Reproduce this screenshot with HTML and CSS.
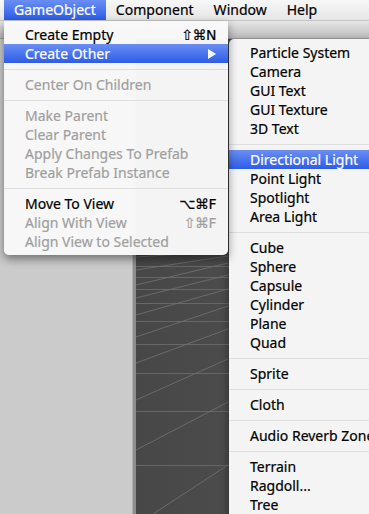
FILE: index.html
```html
<!DOCTYPE html>
<html lang="en">
<head>
    <meta charset="UTF-8">
    <meta name="viewport" content="width=device-width, initial-scale=1.0">
    <title>GameObject menu</title>
    <link rel="stylesheet" href="styles.css">
</head>
<body>
    <div class="menubar">
        <div class="menubar-item active">GameObject</div>
        <div class="menubar-item">Component</div>
        <div class="menubar-item">Window</div>
        <div class="menubar-item">Help</div>
    </div>

    <div class="editor">
        <div class="toolbar"></div>
        <div class="panes">
            <div class="hierarchy"></div>
            <div class="divider"></div>
            <div class="scene">
                <svg width="233" height="475" viewBox="136 39 233 475">
                    <g stroke="#676767" stroke-width="1">
                        <line x1="136" y1="266.5" x2="369" y2="266.5"/>
                        <line x1="136" y1="277.5" x2="369" y2="277.5"/>
                        <line x1="136" y1="289.5" x2="369" y2="289.5"/>
                        <line x1="136" y1="303.5" x2="369" y2="303.5"/>
                        <line x1="136" y1="321.5" x2="369" y2="321.5"/>
                        <line x1="136" y1="344.5" x2="369" y2="344.5"/>
                        <line x1="136" y1="373.5" x2="369" y2="373.5"/>
                        <line x1="136" y1="411.5" x2="369" y2="411.5"/>
                        <line x1="136" y1="465.5" x2="369" y2="465.5"/>
                    </g>
                    <g stroke="#747474" stroke-width="0.8">
                        <line x1="136" y1="257" x2="228" y2="251"/>
                        <line x1="136" y1="270" x2="228" y2="256"/>
                        <line x1="136" y1="285" x2="228" y2="263"/>
                        <line x1="136" y1="298" x2="228" y2="275"/>
                        <line x1="136" y1="315" x2="228" y2="289"/>
                        <line x1="136" y1="337" x2="228" y2="306"/>
                        <line x1="136" y1="363" x2="228" y2="329"/>
                        <line x1="136" y1="400" x2="228" y2="359"/>
                        <line x1="136" y1="450" x2="228" y2="402"/>
                        <line x1="153" y1="514" x2="228" y2="465"/>
                    </g>
                </svg>
            </div>
        </div>
    </div>

    <!-- GameObject dropdown -->
    <div class="menu main-menu">
        <div class="item"><span>Create Empty</span><span class="key">⇧⌘N</span></div>
        <div class="item selected"><span>Create Other</span><span class="arrow"></span></div>
        <div class="sep"></div>
        <div class="item disabled"><span>Center On Children</span></div>
        <div class="sep"></div>
        <div class="item disabled"><span>Make Parent</span></div>
        <div class="item disabled"><span>Clear Parent</span></div>
        <div class="item disabled"><span>Apply Changes To Prefab</span></div>
        <div class="item disabled"><span>Break Prefab Instance</span></div>
        <div class="sep"></div>
        <div class="item"><span>Move To View</span><span class="key">⌥⌘F</span></div>
        <div class="item disabled"><span>Align With View</span><span class="key">⇧⌘F</span></div>
        <div class="item disabled"><span>Align View to Selected</span></div>
    </div>

    <!-- Create Other submenu -->
    <div class="menu sub-menu">
        <div class="item"><span>Particle System</span></div>
        <div class="item"><span>Camera</span></div>
        <div class="item"><span>GUI Text</span></div>
        <div class="item"><span>GUI Texture</span></div>
        <div class="item"><span>3D Text</span></div>
        <div class="sep"></div>
        <div class="item selected"><span>Directional Light</span></div>
        <div class="item"><span>Point Light</span></div>
        <div class="item"><span>Spotlight</span></div>
        <div class="item"><span>Area Light</span></div>
        <div class="sep"></div>
        <div class="item"><span>Cube</span></div>
        <div class="item"><span>Sphere</span></div>
        <div class="item"><span>Capsule</span></div>
        <div class="item"><span>Cylinder</span></div>
        <div class="item"><span>Plane</span></div>
        <div class="item"><span>Quad</span></div>
        <div class="sep"></div>
        <div class="item"><span>Sprite</span></div>
        <div class="sep"></div>
        <div class="item"><span>Cloth</span></div>
        <div class="sep"></div>
        <div class="item"><span>Audio Reverb Zone</span></div>
        <div class="sep"></div>
        <div class="item"><span>Terrain</span></div>
        <div class="item"><span>Ragdoll...</span></div>
        <div class="item"><span>Tree</span></div>
    </div>
</body>
</html>
```

FILE: styles.css
```css
body {
    font-family: "Lucida Grande", "Noto Sans", "DejaVu Sans", sans-serif;
    font-size: 14px;
    margin: 0;
    padding: 0;
    width: 369px;
    height: 514px;
    overflow: hidden;
    position: relative;
    background-color: #cbcbcb;
}

/* Menu bar */
.menubar {
    display: flex;
    height: 21px;
    padding-left: 4px;
    background: linear-gradient(#f7f7f7, #e6e6e6);
    border-bottom: 1px solid #c4c4c4;
    box-sizing: border-box;
}

.menubar-item {
    padding: 0 10px;
    line-height: 20px;
    color: #000;
    -webkit-text-stroke: 0.2px;
}

.menubar-item.active {
    color: #fff;
    background: linear-gradient(#6a8ef3, #2d5de8);
}

/* Editor window behind the menus */
.editor {
    display: flex;
    flex-direction: column;
    height: 493px;
}

.toolbar {
    height: 18px;
    background: linear-gradient(#e6e6e6, #bcbcbc);
    border-bottom: 1px solid #9c9c9c;
}

.panes {
    flex: 1;
    display: flex;
}

.hierarchy {
    width: 132px;
    background-color: #cbcbcb;
}

.divider {
    width: 4px;
    background-color: #8e8e8e;
    border-left: 1px solid #b2b2b2;
    box-sizing: border-box;
}

.scene {
    flex: 1;
    background: linear-gradient(90deg, #474747, #525252);
    overflow: hidden;
}

.scene svg {
    display: block;
}

/* Menus */
.menu {
    position: absolute;
    background-color: rgba(248, 248, 248, 0.98);
    padding: 4px 0;
    box-shadow: 0 4px 10px rgba(0, 0, 0, 0.45);
}

.main-menu {
    top: 21px;
    left: 4px;
    width: 224px;
    border-radius: 0 0 5px 5px;
    z-index: 2;
}

.sub-menu {
    top: 39px;
    left: 229px;
    width: 170px;
    border-radius: 5px 0 0 5px;
    z-index: 1;
}

.item {
    display: flex;
    justify-content: space-between;
    align-items: center;
    height: 19px;
    padding: 0 12px 0 21px;
    color: #000;
    white-space: nowrap;
    -webkit-text-stroke: 0.2px;
}

.item.disabled {
    color: #9f9f9f;
}

.item.selected {
    color: #fff;
    background: linear-gradient(#6a8ef3, #2d5de8);
}

.key {
    font-family: "DejaVu Sans", sans-serif;
    font-size: 14px;
    letter-spacing: -0.5px;
}

.arrow {
    width: 0;
    height: 0;
    border-left: 8px solid #fff;
    border-top: 5px solid transparent;
    border-bottom: 5px solid transparent;
}

.sep {
    height: 1px;
    margin: 6px 0 5px;
    background-color: #dedede;
}
```
